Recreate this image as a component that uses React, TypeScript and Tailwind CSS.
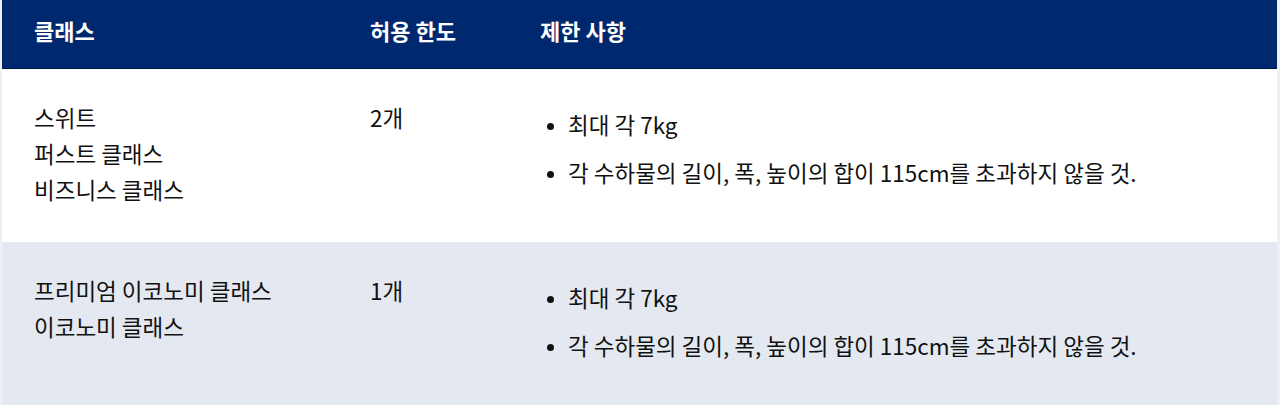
import React from "react";

const rows = [
  {
    classes: ["스위트", "퍼스트 클래스", "비즈니스 클래스"],
    limit: "2개",
    bg: "bg-white",
  },
  {
    classes: ["프리미엄 이코노미 클래스", "이코노미 클래스"],
    limit: "1개",
    bg: "bg-[#e4e8f0]",
  },
];

const rules = ["최대 각 7kg", "각 수하물의 길이, 폭, 높이의 합이 115cm를 초과하지 않을 것."];

export default function App() {
  return (
    <div
      className="w-[1280px] h-[405px] overflow-hidden bg-[#eef0f3] pl-[2px] pr-[3px]"
      style={{ fontFamily: '"Noto Sans CJK KR", "Noto Sans", sans-serif' }}
    >
      <div className="w-full">
        <div className="flex h-[69px] items-center pb-[7px] bg-[#00286e] border-b border-[#001645] text-white font-bold text-[22px]">
          <div className="w-[336px] pl-[32px]">클래스</div>
          <div className="w-[170px] pl-[32px]">허용 한도</div>
          <div className="flex-1 pl-[32px]">제한 사항</div>
        </div>
        {rows.map((r, i) => (
          <div key={i} className={`flex ${r.bg} text-[22.5px] leading-[36px] text-[#111] pt-[30px] pb-[35px]`}>
            <div className="w-[336px] pl-[32px] flex flex-col">
              {r.classes.map((c) => (
                <span key={c}>{c}</span>
              ))}
            </div>
            <div className="w-[170px] pl-[32px]">{r.limit}</div>
            <div className="flex-1 pl-[32px]">
              <ul className="list-disc pl-[28px] py-[7px] flex flex-col gap-[12px] marker:text-[18px]">
                {rules.map((t) => (
                  <li key={t}>{t}</li>
                ))}
              </ul>
            </div>
          </div>
        ))}
      </div>
    </div>
  );
}
